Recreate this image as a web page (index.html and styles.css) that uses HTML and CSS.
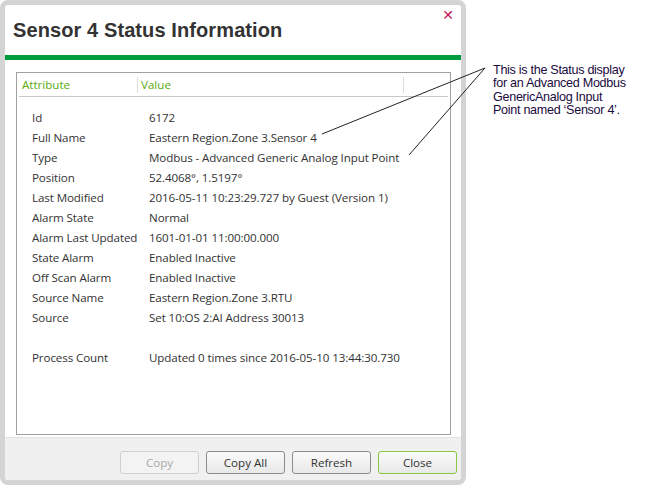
FILE: index.html
```html
<!DOCTYPE html>
<html lang="en">

<head>
    <meta charset="UTF-8">
    <title>Sensor 4 Status Information</title>
    <link rel="stylesheet" href="styles.css">
</head>

<body>
    <div class="page">
        <div class="dialog">
            <div class="dialog-header">
                <h1 class="dialog-title">Sensor 4 Status Information</h1>
                <span class="close-btn">&#x2715;</span>
            </div>
            <div class="green-bar"></div>

            <div class="dialog-body">
                <div class="grid-box">
                    <div class="grid-head">
                        <div class="col-attr">Attribute</div>
                        <div class="col-val">Value</div>
                        <div class="col-rest"></div>
                    </div>
                    <div class="rows">
                        <div class="row"><span class="attr">Id</span><span class="val">6172</span></div>
                        <div class="row"><span class="attr">Full Name</span><span class="val">Eastern Region.Zone 3.Sensor 4</span></div>
                        <div class="row"><span class="attr">Type</span><span class="val">Modbus - Advanced Generic Analog Input Point</span></div>
                        <div class="row"><span class="attr">Position</span><span class="val">52.4068°, 1.5197°</span></div>
                        <div class="row"><span class="attr">Last Modified</span><span class="val">2016-05-11 10:23:29.727 by Guest (Version 1)</span></div>
                        <div class="row"><span class="attr">Alarm State</span><span class="val">Normal</span></div>
                        <div class="row"><span class="attr">Alarm Last Updated</span><span class="val">1601-01-01 11:00:00.000</span></div>
                        <div class="row"><span class="attr">State Alarm</span><span class="val">Enabled Inactive</span></div>
                        <div class="row"><span class="attr">Off Scan Alarm</span><span class="val">Enabled Inactive</span></div>
                        <div class="row"><span class="attr">Source Name</span><span class="val">Eastern Region.Zone 3.RTU</span></div>
                        <div class="row"><span class="attr">Source</span><span class="val">Set 10:OS 2:AI Address 30013</span></div>
                        <div class="row"></div>
                        <div class="row"><span class="attr">Process Count</span><span class="val">Updated 0 times since 2016-05-10 13:44:30.730</span></div>
                    </div>
                </div>
            </div>

            <div class="dialog-footer">
                <button class="btn" disabled>Copy</button>
                <button class="btn">Copy All</button>
                <button class="btn">Refresh</button>
                <button class="btn btn-default">Close</button>
            </div>
        </div>

        <div class="note">
            This is the Status display<br>
            for an Advanced Modbus<br>
            GenericAnalog Input<br>
            Point named ‘Sensor 4’.
        </div>
    </div>

    <!-- callout lines drawn over the dialog -->
    <svg class="callouts" width="650" height="486" viewBox="0 0 650 486">
        <line x1="485" y1="68" x2="322" y2="134" />
        <line x1="485" y1="68" x2="409" y2="155" />
    </svg>
</body>

</html>
```

FILE: styles.css
```css
body {
    margin: 0;
    padding: 0;
    background: #ffffff;
    font-family: "Open Sans", "Noto Sans", sans-serif;
    position: relative;
    width: 650px;
    height: 486px;
    overflow: hidden;
}

.page {
    display: flex;
    align-items: flex-start;
}

/* Dialog frame */
.dialog {
    width: 456px;
    height: 475px;
    border: 5px solid #d4d4d4;
    border-radius: 8px;
    background: #ffffff;
    display: flex;
    flex-direction: column;
    overflow: hidden;
}

.dialog-header {
    height: 50px;
    display: flex;
    justify-content: space-between;
    align-items: flex-start;
    padding: 0 7px 0 8px;
    box-sizing: border-box;
}

.dialog-title {
    margin: 14px 0 0 0;
    font-family: "Liberation Sans", Arial, sans-serif;
    font-size: 20px;
    font-weight: bold;
    color: #333333;
    letter-spacing: 0.1px;
}

.close-btn {
    margin-top: 2px;
    font-family: "DejaVu Sans", sans-serif;
    font-size: 14px;
    font-weight: bold;
    color: #c8175a;
}

.green-bar {
    height: 5px;
    background: #009c3f;
}

.dialog-body {
    flex: 1;
    padding: 12px 10px 2px 11px;
    display: flex;
}

.grid-box {
    flex: 1;
    border: 1px solid #a0a0a0;
    padding: 0 2px;
}

.grid-head {
    display: flex;
    height: 23px;
    align-items: center;
    border-bottom: 1px solid #c8c8c8;
    font-size: 11.6px;
    color: #5aaa10;
}

.grid-head div {
    height: 16px;
    line-height: 16px;
}

.col-attr {
    width: 115px;
    padding-left: 3px;
    border-right: 1px solid #dddddd;
}

.col-val {
    width: 262px;
    padding-left: 3px;
    border-right: 1px solid #dddddd;
}

.rows {
    padding: 11px 0 0 13px;
}

.row {
    display: flex;
    height: 20px;
    line-height: 20px;
    font-size: 11.6px;
    letter-spacing: -0.1px;
    color: #333333;
}

.attr {
    width: 117px;
    white-space: nowrap;
}

.val {
    white-space: nowrap;
}

/* Footer */
.dialog-footer {
    height: 43px;
    background: #f0f0f0;
    border-top: 1px solid #e2e2e2;
    display: flex;
    justify-content: flex-end;
    align-items: flex-start;
    gap: 7px;
    padding: 13px 4px 0 0;
    box-sizing: border-box;
}

.btn {
    width: 79px;
    height: 23px;
    font-family: "Open Sans", "Noto Sans", sans-serif;
    font-size: 11.6px;
    color: #333333;
    background: linear-gradient(#fafafa, #e8e8e8);
    border: 1px solid #8c8c8c;
    border-radius: 3px;
    padding: 0;
}

.btn:disabled {
    color: #a8a8a8;
    border-color: #d0d0d0;
    background: #f3f3f3;
}

.btn-default {
    border-color: #8cc63f;
}

/* Annotation */
.note {
    margin: 64px 0 0 27px;
    font-family: "Liberation Sans", Arial, sans-serif;
    font-size: 12.6px;
    line-height: 13.4px;
    letter-spacing: -0.3px;
    color: #1a0a40;
}

.callouts {
    position: absolute;
    left: 0;
    top: 0;
    pointer-events: none;
}

.callouts line {
    stroke: #222222;
    stroke-width: 1;
}
```
